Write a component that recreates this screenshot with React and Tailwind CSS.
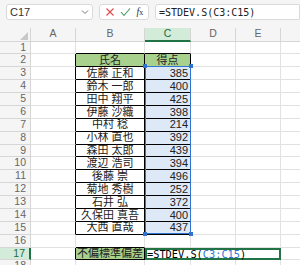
import React from 'react';

const rows = [
    ['佐藤 正和', 385],
    ['鈴木 一郎', 400],
    ['田中 翔平', 425],
    ['伊藤 沙織', 398],
    ['中村 稔', 214],
    ['小林 直也', 392],
    ['森田 太郎', 439],
    ['渡辺 浩司', 394],
    ['後藤 崇', 496],
    ['菊地 秀樹', 252],
    ['石井 弘', 372],
    ['久保田 真吾', 400],
    ['大西 直哉', 437],
];

const cols = [
    { key: 'A', w: 'w-[45px]' },
    { key: 'B', w: 'w-[69px]' },
    { key: 'C', w: 'w-[46px]' },
    { key: 'D', w: 'w-[45px]' },
    { key: 'E', w: 'w-[45px]' },
];

const font = "font-['Liberation_Sans','Noto_Sans_CJK_JP',sans-serif]";
const mono = "font-['DejaVu_Sans_Mono','Liberation_Mono',monospace]";

// is this cell inside the black-bordered table?
const inTable = (r, c) => (r >= 2 && r <= 15 && (c === 'B' || c === 'C')) || (r === 17 && c === 'B');
const next = { A: 'B', B: 'C', C: 'D', D: 'E', E: 'F' };

function Cell({ r, c, w, children, className = '' }) {
    const right = inTable(r, c) || inTable(r, next[c]) ? 'border-r-black' : 'border-r-[#e1e1e1]';
    const bottom = inTable(r, c) || inTable(r + 1, c) ? 'border-b-black' : 'border-b-[#e1e1e1]';
    return (
        <div className={`${w} shrink-0 h-full border-r border-b ${right} ${bottom} flex items-center ${className}`}>
            {children}
        </div>
    );
}

function Row({ r }) {
    const active = r === 17;
    const data = r >= 3 && r <= 15 ? rows[r - 3] : null;
    return (
        <div className="flex h-[12.875px]">
            <div className={`w-[31px] shrink-0 h-full flex items-center justify-end pr-[4px] text-[10.5px] ${active ? 'bg-[#d2ecd9] text-[#1e6b3c] border-r-2 border-r-[#217346] border-b border-b-[#d6d6d6]' : 'bg-[#f5f5f5] text-[#666] border-r border-b border-[#d6d6d6]'}`}>
                {r}
            </div>
            {cols.map(({ key, w }) => {
                if (active && key === 'C') {
                    return (
                        <div key={key} className={`w-[136px] shrink-0 h-full border-2 border-[#217346] flex items-center text-[10.3px] leading-none ${mono} text-black whitespace-nowrap`}>
                            =STDEV.S(<span className="text-[#2f74d0]">C3:C15</span>)
                        </div>
                    );
                }
                if (active && (key === 'D' || key === 'E')) return null;
                let content = null;
                let cls = '';
                if (key === 'B' && r === 2) { content = '氏名'; cls = 'bg-[#a9d18e] justify-center'; }
                if (key === 'C' && r === 2) { content = '得点'; cls = 'bg-[#a9d18e] justify-center'; }
                if (key === 'B' && data) { content = data[0]; cls = 'justify-center'; }
                if (key === 'C' && data) { content = data[1]; cls = 'bg-[#dde9f6] justify-end pr-[2px]'; }
                if (key === 'B' && active) { content = '不偏標準偏差'; cls = 'bg-[#a9d18e] justify-center'; }
                return (
                    <Cell key={key} r={r} c={key} w={w} className={`text-[11px] text-[#222] whitespace-nowrap ${cls}`}>
                        {content}
                    </Cell>
                );
            })}
            <div className="flex-1 h-full border-b border-[#e1e1e1]" />
        </div>
    );
}

export default function App() {
    return (
        <div className={`w-[300px] h-[265px] overflow-hidden bg-white ${font}`}>
            {/* formula bar */}
            <div className="h-[28px] bg-[#f5f5f5] flex items-start pt-[4px] pl-[6px] gap-[6px]">
                <div className="w-[87px] h-[16px] bg-white border border-[#dadada] rounded-[3px] flex items-center justify-between px-[3px] text-[11px] text-[#333]">
                    <span>C17</span>
                    <svg width="8" height="6" viewBox="0 0 8 6"><path d="M1 1.5 L4 4.5 L7 1.5" fill="none" stroke="#777" strokeWidth="1" /></svg>
                </div>
                <div className="w-[50px] h-[16px] bg-white border border-[#dadada] rounded-[3px] flex items-center justify-around px-[2px]">
                    <svg width="10" height="10" viewBox="0 0 10 10"><path d="M1.5 1.5 L8.5 8.5 M8.5 1.5 L1.5 8.5" stroke="#e0494b" strokeWidth="1.1" /></svg>
                    <svg width="11" height="10" viewBox="0 0 11 10"><path d="M1 5 L4 8.5 L10 1.5" fill="none" stroke="#3c9a5f" strokeWidth="1.1" /></svg>
                    <span className="text-[10px] italic font-['Liberation_Serif',serif] text-[#333] leading-none">f<span className="text-[8px] not-italic">x</span></span>
                </div>
                <div className={`flex-1 h-[16px] bg-white border border-[#dadada] rounded-l-[3px] flex items-center pl-[3px] text-[10px] text-[#222] ${mono}`}>
                    =STDEV.S(C3:C15)
                </div>
            </div>
            {/* column headers */}
            <div className="flex h-[13.5px] bg-[#f5f5f5] text-[10.5px] text-[#666]">
                <div className="w-[31px] shrink-0 h-full border-r border-b border-[#d6d6d6] flex items-end justify-end pr-[2px] pb-[1px]">
                    <svg width="8" height="8" viewBox="0 0 8 8"><path d="M8 0 L8 8 L0 8 Z" fill="#c8c8c8" /></svg>
                </div>
                {cols.map(({ key, w }) => (
                    <div key={key} className={`${w} shrink-0 h-full flex items-center justify-center ${key === 'C' ? 'bg-[#d2ecd9] text-[#1e6b3c] border-r border-r-[#d6d6d6] border-b-2 border-b-[#217346]' : 'border-r border-b border-[#d6d6d6]'}`}>
                        {key}
                    </div>
                ))}
                <div className="flex-1 h-full border-b border-[#d6d6d6]" />
            </div>
            {/* grid */}
            <div className="relative">
                {Array.from({ length: 18 }, (_, i) => <Row key={i} r={i + 1} />)}
                {/* reference highlight around C3:C15 */}
                <div className="absolute left-[144.5px] top-[24.5px] w-[46.5px] h-[168px] border-[1.5px] border-[#2f74d0] pointer-events-none">
                    <div className="absolute -left-[3px] -top-[3px] w-[4px] h-[4px] bg-[#2f74d0]" />
                    <div className="absolute -right-[3px] -top-[3px] w-[4px] h-[4px] bg-[#2f74d0]" />
                    <div className="absolute -left-[3px] -bottom-[3px] w-[4px] h-[4px] bg-[#2f74d0]" />
                    <div className="absolute -right-[3px] -bottom-[3px] w-[4px] h-[4px] bg-[#2f74d0]" />
                </div>
            </div>
        </div>
    );
}
